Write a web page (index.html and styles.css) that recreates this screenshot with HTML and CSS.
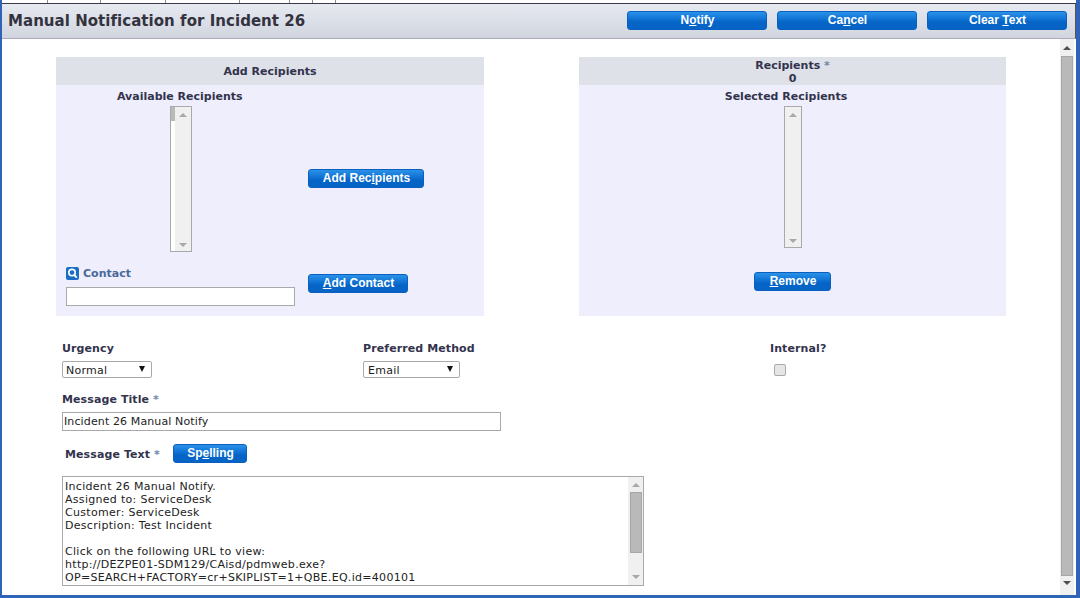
FILE: index.html
```html
<!DOCTYPE html>
<html lang="en">
<head>
<meta charset="utf-8">
<title>Manual Notification for Incident 26</title>
<link rel="stylesheet" href="styles.css">
</head>
<body>
<div class="window">
  <div class="topstrip">
    <span class="c c1"></span><span class="c c2"></span><span class="c c3"></span><span class="c c4"></span><span class="c c5"></span><span class="c c6"></span><span class="c c7"></span>
  </div>
  <header class="titlebar">
    <h1 class="title">Manual Notification for Incident 26</h1>
    <div class="actions">
      <button class="btn btn-top">N<u>o</u>tify</button>
      <button class="btn btn-top">Ca<u>n</u>cel</button>
      <button class="btn btn-top">Clear <u>T</u>ext</button>
    </div>
  </header>
  <div class="viewport">
    <main class="content">
      <div class="panels">
        <section class="panel panel-left">
          <div class="panel-head">Add Recipients</div>
          <div class="panel-body left-body">
            <div class="left-col">
              <div class="sub-label avail">Available Recipients</div>
              <div class="listbox lb-left">
                <div class="sb-thumb-mini"></div>
                <div class="lb-track"><span class="arr up"></span><span class="arr down"></span></div>
              </div>
              <div class="contact-label">
                <svg class="search" width="13" height="13" viewBox="0 0 13 13"><rect width="13" height="13" rx="2" fill="#1a6fc4"/><circle cx="6" cy="5.6" r="3.2" fill="none" stroke="#fff" stroke-width="1.6"/><path d="M8.2 8l2.6 2.6" stroke="#fff" stroke-width="1.8"/></svg>
                <span>Contact</span>
              </div>
              <input class="field contact-input" type="text" aria-label="Contact">
            </div>
            <div class="left-actions">
              <button class="btn btn-addr">Add Rec<u>i</u>pients</button>
              <button class="btn btn-addc"><u>A</u>dd Contact</button>
            </div>
          </div>
        </section>
        <section class="panel panel-right">
          <div class="panel-head head-two">Recipients <span class="req">*</span><br>0</div>
          <div class="panel-body right-body">
            <div class="sub-label sub-sel">Selected Recipients</div>
            <div class="listbox lb-right">
              <div class="lb-track"><span class="arr up"></span><span class="arr down"></span></div>
            </div>
            <button class="btn btn-remove"><u>R</u>emove</button>
          </div>
        </section>
      </div>

      <div class="row-fields">
        <div class="fld f-urg">
          <label class="lbl">Urgency</label>
          <div class="sel sel-urg">Normal<span class="caret"></span></div>
        </div>
        <div class="fld f-pref">
          <label class="lbl">Preferred Method</label>
          <div class="sel sel-pref">Email<span class="caret"></span></div>
        </div>
        <div class="fld f-int">
          <label class="lbl">Internal?</label>
          <input class="check" type="checkbox" aria-label="Internal?">
        </div>
      </div>

      <label class="lbl msg-title">Message Title <span class="req">*</span></label>
      <input class="field title-input" type="text" value="Incident 26 Manual Notify">

      <div class="msg-row">
        <label class="lbl">Message Text <span class="req">*</span></label>
        <button class="btn btn-spell">Sp<u>e</u>lling</button>
      </div>

      <div class="textarea">
        <div class="ta-text">Incident 26 Manual Notify.
Assigned to: ServiceDesk
Customer: ServiceDesk
Description: Test Incident

Click on the following URL to view:
http://DEZPE01-SDM129/CAisd/pdmweb.exe?
OP=SEARCH+FACTORY=cr+SKIPLIST=1+QBE.EQ.id=400101</div>
        <div class="ta-sb"><span class="arr up"></span><div class="ta-thumb"></div><span class="arr down"></span></div>
      </div>
    </main>
    <aside class="page-sb">
      <span class="arr up dark"></span>
      <div class="page-thumb"></div>
      <span class="arr down dark"></span>
    </aside>
  </div>
</div>
</body>
</html>
```
FILE: styles.css
```css
* { box-sizing: border-box; }
html, body { margin: 0; padding: 0; height: 100%; background: #fff; overflow: hidden; }
body { font-family: "DejaVu Sans", Verdana, sans-serif; color: #33334d; }

.window {
  width: 1080px; height: 598px;
  display: flex; flex-direction: column;
  border-left: 2px solid #2f63b5;
  border-right: 4px solid #2f63b5;
  border-bottom: 3px solid #2f63b5;
}

.topstrip { height: 4px; display: flex; flex: none; border-bottom: 1px solid #3a3a44; background: #fff; }
.c { height: 3px; border-right: 1px solid #8c8c94; }
.c1 { width: 46px; } .c2 { width: 53px; } .c3 { width: 65px; } .c4 { width: 74px; }
.c5 { width: 50px; } .c6 { width: 23px; } .c7 { width: 23px; }

.titlebar {
  height: 35px; flex: none;
  display: flex; align-items: flex-start; justify-content: space-between;
  background: linear-gradient(#e6e9f0, #d1d5df);
  border-bottom: 1px solid #a9acb8;
  border-right: 1px solid #555;
  padding: 7px 8px 0 6px;
}
.title { margin: 1px 0 0; font-size: 15px; line-height: 18px; font-weight: 700; color: #33333f; letter-spacing: 0.04px; }
.actions { display: flex; gap: 10px; }

.btn {
  display: block; height: 19px; padding: 0 0 1px 1px;
  border: 1px solid #0a5fbf; border-radius: 3px;
  background: linear-gradient(#2a92e8 0%, #1478d8 35%, #0564c6 60%, #0564c6 100%);
  color: #fff;
  font: 700 12px/15px "Liberation Sans", Arial, sans-serif;
  text-align: center;
}
.btn u { text-underline-offset: 1px; }
.btn-top { width: 140px; }

.viewport { flex: 1; min-height: 0; display: flex; }
.content { flex: 1; min-width: 0; padding: 18px 0 0 54px; }

.page-sb {
  width: 14px; flex: none; margin-right: 2px;
  background: #f0f0f0;
  display: flex; flex-direction: column; align-items: center;
}
.page-sb .up { margin-top: 7px; }
.page-thumb { width: 12px; flex: 1; margin: 6px 0 5px; background: #b9b9b9; border: 1px solid #a6a6a6; }
.page-sb .down { margin-bottom: 10px; }

.arr { display: block; width: 0; height: 0; border-left: 4px solid transparent; border-right: 4px solid transparent; }
.arr.up { border-bottom: 4px solid #a8a8a8; }
.arr.down { border-top: 4px solid #a8a8a8; }
.arr.up.dark { border-bottom-color: #505050; }
.arr.down.dark { border-top-color: #505050; }

.panels { display: flex; gap: 95px; width: 950px; }
.panel { background: #eeeefc; height: 259px; display: flex; flex-direction: column; }
.panel-left { width: 428px; }
.panel-right { width: 427px; }
.panel-head {
  height: 28px; flex: none; background: #dee1e8;
  text-align: center; font-size: 11px; font-weight: 700; line-height: 30px; color: #33334d;
}
.head-two { line-height: 13px; padding-top: 2px; }
.req { color: #6f86a8; font-weight: 700; }

.panel-body { flex: 1; min-height: 0; }
.left-body { display: flex; }
.left-col { width: 252px; padding-left: 10px; display: flex; flex-direction: column; }
.sub-label { font-size: 11px; font-weight: 700; line-height: 14px; color: #33334d; padding-top: 5px; height: 21px; }
.sub-sel { padding-right: 13px; }
.avail { width: 229px; text-align: left; padding-left: 51px; }
.listbox { width: 22px; border: 1px solid #a9a9a9; display: flex; background: #f0f0f0; }
.lb-left { height: 146px; margin-left: 104px; }
.lb-right { height: 142px; width: 18px; margin: 0 auto; }
.sb-thumb-mini { width: 4px; background: linear-gradient(#b9b9b9 0 14px, #fff 14px); }
.lb-track { flex: 1; display: flex; flex-direction: column; justify-content: space-between; align-items: center; padding: 6px 0 4px; }
.contact-label { display: flex; align-items: center; gap: 4px; margin-top: 14px; height: 14px; font-size: 11px; font-weight: 700; color: #4a6a9a; }
.search { flex: none; }
.field { display: block; border: 1px solid #a9a9a9; background: #fff; height: 19px; padding: 0 1px; font: 11px "DejaVu Sans", Verdana, sans-serif; color: #222; outline: none; letter-spacing: 0.12px; }
.contact-input { width: 229px; margin-top: 7px; }

.left-actions { flex: 1; display: flex; flex-direction: column; align-items: flex-start; padding-top: 84px; }
.btn-addr { width: 116px; }
.btn-addc { width: 100px; margin-top: 86px; }

.right-body { display: flex; flex-direction: column; align-items: center; text-align: center; }
.btn-remove { width: 77px; margin-top: 24px; }

.row-fields { display: flex; margin-top: 26px; padding-left: 6px; }
.fld { display: flex; flex-direction: column; align-items: flex-start; }
.f-urg { width: 301px; }
.f-pref { width: 407px; }
.lbl { font-size: 11px; font-weight: 700; line-height: 14px; color: #33334d; letter-spacing: 0.1px; }
.sel { position: relative; margin-top: 5px; height: 17px; border: 1px solid #a9a9a9; border-radius: 2px; background: #fff; font-size: 11px; line-height: 17px; padding-left: 3px; color: #222; letter-spacing: 0.25px; }
.sel-urg { width: 90px; }
.sel-pref { width: 97px; padding-left: 4px; }
.caret { position: absolute; right: 6px; top: 4px; width: 0; height: 0; border-left: 3px solid transparent; border-right: 3px solid transparent; border-top: 6px solid #111; }
.check { appearance: none; -webkit-appearance: none; width: 12px; height: 12px; margin: 8px 0 0 4px; border: 1px solid #a9a9a9; border-radius: 2px; background: #e6e6e6; }

.msg-title { display: block; margin: 15px 0 0 6px; }
.title-input { width: 439px; margin: 5px 0 0 6px; }

.msg-row { display: flex; align-items: center; margin: 13px 0 0 9px; height: 19px; }
.msg-row .lbl { width: 108px; padding-top: 2px; height: 16px; }
.btn-spell { width: 74px; }

.textarea { width: 582px; height: 110px; margin: 13px 0 0 6px; border: 1px solid #a9a9a9; display: flex; background: #fff; }
.ta-text { flex: 1; white-space: pre; font-size: 11px; line-height: 13px; padding: 3px 2px 0; color: #222; overflow: hidden; letter-spacing: 0.3px; }
.ta-sb { width: 15px; flex: none; background: #f0f0f0; display: flex; flex-direction: column; align-items: center; }
.ta-sb .up { margin-top: 6px; }
.ta-thumb { width: 12px; height: 61px; margin-top: 5px; background: #b9b9b9; border: 1px solid #a6a6a6; }
.ta-sb .down { margin-top: auto; margin-bottom: 6px; }
```
